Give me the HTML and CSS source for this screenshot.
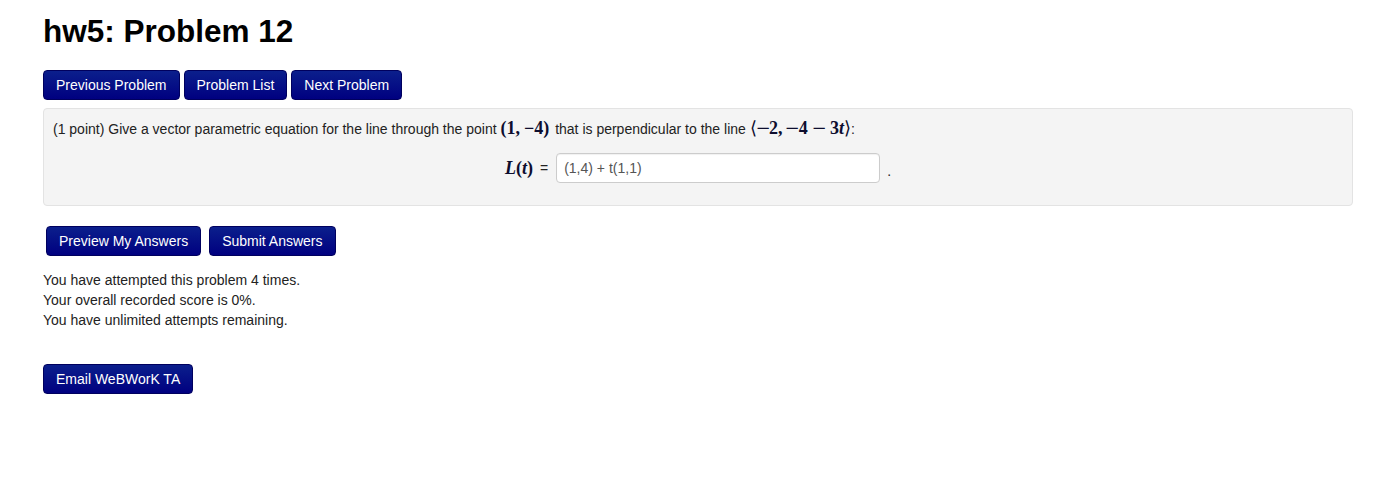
FILE: index.html
```html
<!DOCTYPE html>
<html>
<head>
<meta charset="utf-8">
<link rel="stylesheet" href="styles.css">
</head>
<body>
<div class="page">
  <h1 class="title">hw5: Problem 12</h1>
  <div class="nav">
    <a class="btn">Previous Problem</a>
    <a class="btn">Problem List</a>
    <a class="btn">Next Problem</a>
  </div>
  <div class="well">
    <p class="stmt">(1 point) Give a vector parametric equation for the line through the point <span class="math pt">(1,<span class="thin"></span>−4)</span> that is perpendicular to the line <span class="math"><span class="ang">⟨</span><span class="mn">−</span>2,<span class="thin"></span><span class="mn">−</span>4<span class="med"></span><span class="mn">−</span><span class="med"></span>3<i>t</i><span class="ang">⟩</span></span>:</p>
    <div class="answer">
      <span class="math lhs"><i>L</i>(<i>t</i>)</span>
      <span class="eq">=</span>
      <input class="field" type="text" value="(1,4) + t(1,1)">
      <span class="dot">.</span>
    </div>
  </div>
  <div class="actions">
    <a class="btn">Preview My Answers</a>
    <a class="btn">Submit Answers</a>
  </div>
  <div class="status">
    <div>You have attempted this problem 4 times.</div>
    <div>Your overall recorded score is 0%.</div>
    <div>You have unlimited attempts remaining.</div>
  </div>
  <div class="email">
    <a class="btn">Email WeBWorK TA</a>
  </div>
</div>
</body>
</html>
```
FILE: styles.css
```css
html, body {
  margin: 0;
  padding: 0;
  background: #fff;
}
body {
  font-family: "Liberation Sans", Arial, sans-serif;
  font-size: 14px;
  line-height: 20px;
  color: #222;
}
.page {
  padding-left: 43px;
  width: 1310px;
}
.title {
  font-size: 31.5px;
  font-weight: bold;
  line-height: 40px;
  margin: 11px 0 19px 0;
  color: #000;
}
.nav {
  display: flex;
  gap: 4px;
}
.btn {
  display: inline-block;
  box-sizing: border-box;
  height: 30px;
  padding: 4px 12px;
  font-size: 14px;
  line-height: 20px;
  color: #fff;
  background: linear-gradient(to bottom, #0b1f8c, #000080);
  border: 1px solid #00005e;
  border-radius: 4px;
  white-space: nowrap;
  text-decoration: none;
}
.well {
  margin-top: 8px;
  box-sizing: border-box;
  height: 98px;
  background: #f4f4f4;
  border: 1px solid #e3e3e3;
  border-radius: 4px;
  padding: 9px 9px 0 9px;
}
.stmt {
  margin: 0;
  line-height: 20px;
  color: #222;
}
.math {
  font-family: "Liberation Serif", "Times New Roman", serif;
  font-size: 18px;
  color: #0d0d2e;
  font-weight: bold;
}
.math.pt {
  margin-right: 2px;
}
.math i {
  font-style: italic;
}
.math .ang {
  font-weight: normal;
}
.mn {
  display: inline-block;
  transform: scaleX(1.35);
  margin: 0 1px;
}
.thin {
  display: inline-block;
  width: 4px;
}
.med {
  display: inline-block;
  width: 5px;
}
.answer {
  margin-top: 14px;
  display: flex;
  justify-content: center;
  align-items: center;
  height: 30px;
}
.lhs {
  margin-right: 7px;
}
.eq {
  margin-right: 8px;
  color: #222;
}
.field {
  box-sizing: border-box;
  width: 324px;
  height: 30px;
  margin: 0;
  padding: 4px 7px;
  border: 1px solid #ccc;
  border-radius: 4px;
  background: #fff;
  font-family: "Liberation Sans", Arial, sans-serif;
  font-size: 14px;
  color: #555;
  box-shadow: inset 0 1px 1px rgba(0,0,0,0.06);
}
.dot {
  margin-left: 7px;
  color: #222;
  position: relative;
  top: 3px;
}
.actions {
  margin-top: 20px;
  margin-left: 3px;
  display: flex;
  gap: 8px;
}
.status {
  margin-top: 14px;
  line-height: 20px;
  color: #222;
}
.email {
  margin-top: 34px;
  display: flex;
}
```
